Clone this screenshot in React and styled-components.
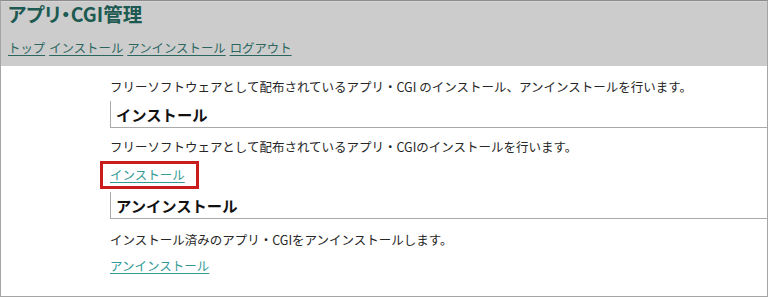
import React from "react";
import styled, { createGlobalStyle } from "styled-components";

const Global = createGlobalStyle`
  html, body {
    margin: 0;
    padding: 0;
    background: #fff;
  }
  body {
    font-family: "Noto Sans CJK JP", "Noto Sans", sans-serif;
    color: #222;
  }
`;

const Frame = styled.div`
  width: 768px;
  height: 297px;
  box-sizing: border-box;
  border: 1px solid #a5a5a5;
  border-top-color: #8c8c8c;
  overflow: hidden;
`;

const Header = styled.header`
  height: 65px;
  box-sizing: border-box;
  background: #cccccc;
  padding: 0 0 0 7px;
  border-top: 1px solid #d6d6d6;
`;

const Title = styled.h1`
  margin: 0;
  font-size: 19.5px;
  line-height: 24px;
  font-weight: 700;
  color: #1d5a51;
  font-feature-settings: "palt";
`;

const Nav = styled.nav`
  margin-top: 14px;
  display: flex;
  gap: 4px;
  font-size: 12.4px;
  line-height: 16px;
`;

const NavLink = styled.a`
  color: #2b665f;
  text-decoration: underline;
  text-underline-offset: 2px;
`;

const Content = styled.main`
  padding-left: 109px;
  display: flex;
  flex-direction: column;
  align-items: flex-start;
`;

const Text = styled.p`
  margin: ${(p) => p.$top}px 0 0;
  font-size: 12.5px;
  line-height: 18px;
  color: #262626;
`;

const Heading = styled.h2`
  align-self: stretch;
  margin: ${(p) => p.$top}px 0 0;
  padding: 1px 0 0 5px;
  font-size: 15.3px;
  line-height: 25px;
  font-weight: 700;
  color: #111;
  border-left: 1px solid #aaa;
  border-bottom: 1px solid #aaa;
`;

const Link = styled.a`
  font-size: 12.5px;
  line-height: 18px;
  color: #339a96;
  text-decoration: underline;
  text-underline-offset: 2px;
`;

const LinkRow = styled.div`
  margin-top: ${(p) => p.$top}px;
  display: flex;
`;

const Marked = styled.div`
  margin-left: -10px;
  padding: 2px 11px 2px 7px;
  border: 3px solid #c91c1c;
  display: flex;
`;

export default function App() {
  return (
    <>
      <Global />
      <Frame>
        <Header>
          <Title>アプリ・CGI管理</Title>
          <Nav>
            <NavLink href="#">トップ</NavLink>
            <NavLink href="#">インストール</NavLink>
            <NavLink href="#">アンインストール</NavLink>
            <NavLink href="#">ログアウト</NavLink>
          </Nav>
        </Header>
        <Content>
          <Text $top={12}>
            フリーソフトウェアとして配布されているアプリ・CGI のインストール、アンインストールを行います。
          </Text>
          <Heading $top={5}>インストール</Heading>
          <Text $top={10}>
            フリーソフトウェアとして配布されているアプリ・CGIのインストールを行います。
          </Text>
          <LinkRow $top={5}>
            <Marked>
              <Link href="#">インストール</Link>
            </Marked>
          </LinkRow>
          <Heading $top={3}>アンインストール</Heading>
          <Text $top={12}>
            インストール済みのアプリ・CGIをアンインストールします。
          </Text>
          <LinkRow $top={8}>
            <Link href="#">アンインストール</Link>
          </LinkRow>
        </Content>
      </Frame>
    </>
  );
}
